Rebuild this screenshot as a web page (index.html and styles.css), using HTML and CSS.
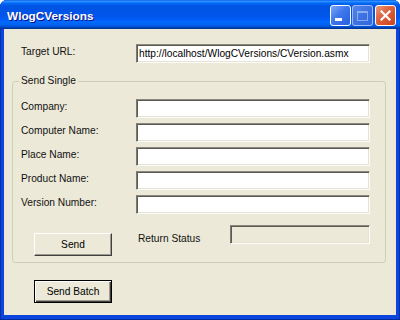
FILE: index.html
```html
<!DOCTYPE html>
<html lang="en">
<head>
    <meta charset="UTF-8">
    <title>WlogCVersions</title>
    <link rel="stylesheet" href="styles.css">
</head>
<body>
    <div class="window">
        <div class="titlebar">
            <span class="title">WlogCVersions</span>
            <div class="controls">
                <span class="ctl min"><span class="bar"></span></span>
                <span class="ctl max"><span class="frame"></span></span>
                <span class="ctl close">
                    <svg width="11" height="11" viewBox="0 0 11 11">
                        <path d="M1.5 1.5 L9.5 9.5 M9.5 1.5 L1.5 9.5" stroke="#fff" stroke-width="2.2" stroke-linecap="square"/>
                    </svg>
                </span>
            </div>
        </div>

        <div class="client">
            <div class="field url-row">
                <label>Target URL:</label>
                <input class="textbox" type="text" value="http://localhost/WlogCVersions/CVersion.asmx">
            </div>

            <fieldset class="group">
                <legend>Send Single</legend>
                <div class="rows">
                    <div class="field">
                        <label>Company:</label>
                        <input class="textbox" type="text">
                    </div>
                    <div class="field">
                        <label>Computer Name:</label>
                        <input class="textbox" type="text">
                    </div>
                    <div class="field">
                        <label>Place Name:</label>
                        <input class="textbox" type="text">
                    </div>
                    <div class="field">
                        <label>Product Name:</label>
                        <input class="textbox" type="text">
                    </div>
                    <div class="field">
                        <label>Version Number:</label>
                        <input class="textbox" type="text">
                    </div>
                </div>
                <div class="send-row">
                    <button class="btn">Send</button>
                    <span class="status-label">Return Status</span>
                    <input class="textbox status" type="text" readonly>
                </div>
            </fieldset>

            <button class="btn default batch">Send Batch</button>
        </div>
    </div>
</body>
</html>
```

FILE: styles.css
```css
* {
    box-sizing: border-box;
}

body {
    margin: 0;
    background: #fff;
    font-family: "Liberation Sans", Arial, sans-serif;
    font-size: 10.2px;
    color: #111;
}

.window {
    width: 400px;
    height: 320px;
    display: flex;
    flex-direction: column;
    background: #0a46dd;
    border-radius: 7px 7px 0 0;
    overflow: hidden;
    box-shadow: inset 0 -1px 0 #002a9c, inset 1px 0 0 #0831a8, inset -1px 0 0 #0831a8;
}

/* title bar */
.titlebar {
    height: 29px;
    flex-shrink: 0;
    display: flex;
    align-items: center;
    justify-content: space-between;
    padding: 2px 4px 0 7px;
    background: linear-gradient(#0058ee 0%, #3593ff 4%, #288eff 6%, #127dff 8%, #036ffc 10%, #0262ee 14%, #0057e5 20%, #0054e3 24%, #0055eb 56%, #005bf5 66%, #026afe 76%, #0062ef 86%, #0052d6 92%, #0040ab 96%, #003092 100%);
}

.title {
    color: #fff;
    font-weight: bold;
    font-size: 11.8px;
    text-shadow: 1px 1px 0 #0f1089;
}

.controls {
    display: flex;
}

.ctl {
    width: 21px;
    height: 21px;
    border: 1px solid #fff;
    border-radius: 3px;
    display: flex;
}

.ctl.min {
    margin-right: 1px;
    align-items: flex-end;
    padding: 0 0 4px 4px;
    background: linear-gradient(135deg, #7aa6f8 0%, #3d77ec 45%, #2a5fdc 100%);
}

.ctl.min .bar {
    width: 7px;
    height: 3px;
    background: #fff;
}

.ctl.max {
    margin-right: 2px;
    align-items: center;
    justify-content: center;
    border-color: rgba(255, 255, 255, 0.5);
    background: linear-gradient(135deg, #5486ec 0%, #3c72e4 50%, #3366dc 100%);
}

.ctl.max .frame {
    width: 11px;
    height: 10px;
    border: 1px solid rgba(255, 255, 255, 0.4);
    border-top-width: 2px;
}

.ctl.close {
    align-items: center;
    justify-content: center;
    background: linear-gradient(135deg, #eb9a7c 0%, #e0643f 40%, #c8421f 100%);
}

/* client area */
.client {
    flex: 1;
    margin: 0 4px 5px 4px;
    background: #ece9d8;
    padding-top: 15px;
}

.field {
    display: flex;
    align-items: flex-start;
}

.field label {
    width: 115px;
    padding-top: 2px;
    line-height: 12px;
}

.url-row {
    margin-left: 17px;
}

.textbox {
    width: 234px;
    height: 19px;
    margin: 0;
    padding: 0 2px;
    font: inherit;
    color: #000;
    background: #fff;
    border: 1px solid;
    border-color: #8a877c #fdfdfb #fdfdfb #7c7a70;
    box-shadow: inset 1px 1px 0 #5c5a52, inset -1px -1px 0 #e6e3d5;
    outline: none;
}

.group {
    margin: 12px 10px 0 8px;
    padding: 0 0 6px 0;
    min-width: 0;
    border: 1px solid #cfcdbe;
    border-radius: 3px;
}

.group legend {
    margin-left: 6px;
    padding: 0 2px;
    line-height: 12px;
}

.rows {
    display: flex;
    flex-direction: column;
    gap: 5px;
    padding: 12px 0 0 8px;
}

.send-row {
    display: flex;
    align-items: flex-start;
    padding: 11px 0 0 21px;
}

.status-label {
    width: 92px;
    margin: 8px 0 0 26px;
    line-height: 12px;
}

.textbox.status {
    width: 140px;
    background: #ece9d8;
}

.btn {
    width: 78px;
    height: 23px;
    padding: 0;
    font: inherit;
    color: #000;
    background: #ece9d8;
    border: 1px solid;
    border-color: #fff #404040 #404040 #fff;
    box-shadow: inset -1px -1px 0 #9d9a8c;
}

.send-row .btn {
    margin-top: 8px;
}

.btn.default {
    border: 1px solid #000;
    box-shadow: inset 1px 1px 0 #fff, inset -1px -1px 0 #404040, inset -2px -2px 0 #9d9a8c;
}

.batch {
    display: block;
    margin: 17px 0 0 30px;
}
```
